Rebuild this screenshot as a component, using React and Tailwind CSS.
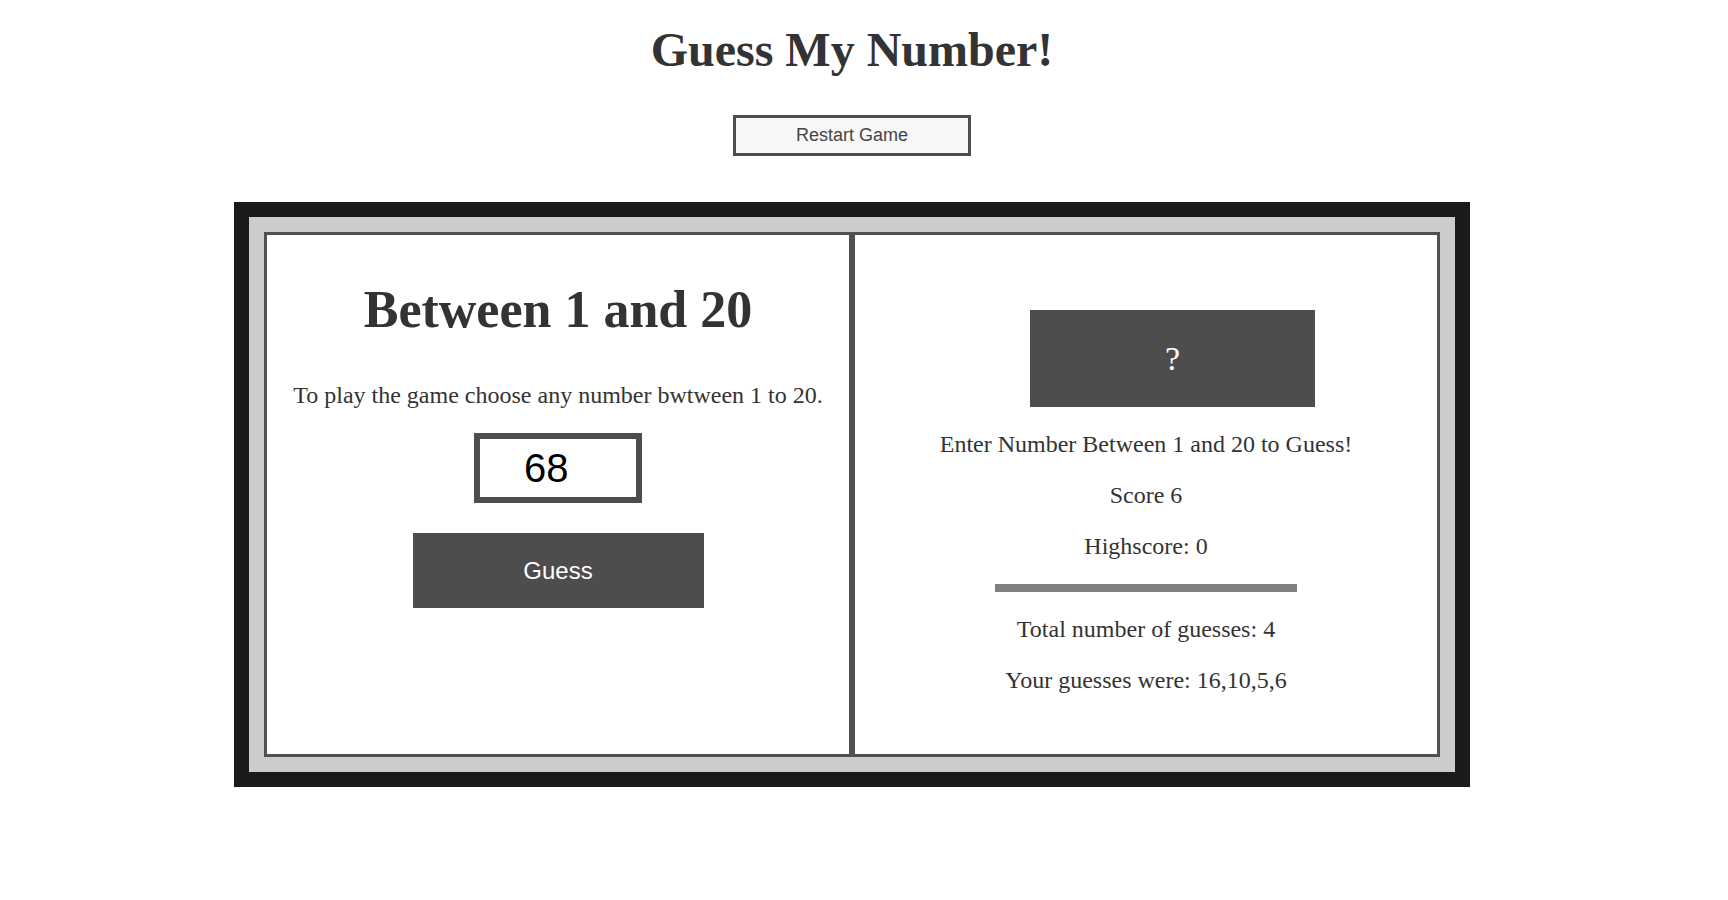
import React, { useState } from 'react';

const GuessPanel = ({ value, setValue }) => {
  return (
    <section className="w-[588px] border-[3px] border-[#505050] bg-white text-center">
      <h2 className="mt-[45px] text-[52px] font-bold leading-[60px] text-[#333]">
        Between 1 and 20
      </h2>
      <p className="mt-[41px] text-[24px] leading-[28px] text-[#333]">
        To play the game choose any number bwtween 1 to 20.
      </p>
      <div className="mt-[24px] flex justify-center">
        <input
          type="text"
          value={value}
          onChange={(e) => setValue(e.target.value)}
          className="h-[70px] w-[168px] border-[6px] border-[#4d4d4d] bg-white pl-[44px] font-['Liberation_Sans',Arial,sans-serif] text-[40px] text-black outline-none"
        />
      </div>
      <div className="mt-[30px] flex justify-center">
        <button className="h-[75px] w-[291px] bg-[#4d4d4d] font-['Liberation_Sans',Arial,sans-serif] text-[24px] text-white">
          Guess
        </button>
      </div>
    </section>
  );
};

const ResultPanel = ({ score, highscore, guesses }) => {
  return (
    <section className="w-[588px] border-[3px] border-[#505050] bg-white text-center text-[24px] leading-[27px] text-[#333]">
      <div className="flex justify-center pl-[53px] pt-[75px]">
        <div className="flex h-[97px] w-[285px] items-center justify-center bg-[#4d4d4d] text-[34px] text-white">
          ?
        </div>
      </div>
      <p className="my-6">Enter Number Between 1 and 20 to Guess!</p>
      <p className="my-6">Score {score}</p>
      <p className="my-6">Highscore: {highscore}</p>
      <div className="mx-auto my-6 h-2 w-[302px] bg-[#808080]" />
      <p className="my-6">Total number of guesses: {guesses.length}</p>
      <p className="my-6">Your guesses were: {guesses.join(',')}</p>
    </section>
  );
};

const App = () => {
  const [value, setValue] = useState('68');
  const score = 6;
  const highscore = 0;
  const guesses = [16, 10, 5, 6];

  return (
    <div className="min-h-screen w-[1704px] bg-white font-['Liberation_Serif','Times_New_Roman',serif]">
      <h1 className="pt-[22px] text-center text-[48px] font-bold leading-[55px] text-[#333]">
        Guess My Number!
      </h1>
      <div className="mt-[38px] flex justify-center">
        <button className="h-[41px] w-[238px] border-[3px] border-[#4d4d4d] bg-[#f8f8f8] font-['Liberation_Sans',Arial,sans-serif] text-[18px] text-[#444]">
          Restart Game
        </button>
      </div>
      <div className="mx-auto mt-[46px] w-[1236px] border-[15px] border-[#1a1a1a] bg-[#cccccc] p-[15px]">
        <div className="flex h-[525px]">
          <GuessPanel value={value} setValue={setValue} />
          <ResultPanel score={score} highscore={highscore} guesses={guesses} />
        </div>
      </div>
    </div>
  );
};

export default App;
